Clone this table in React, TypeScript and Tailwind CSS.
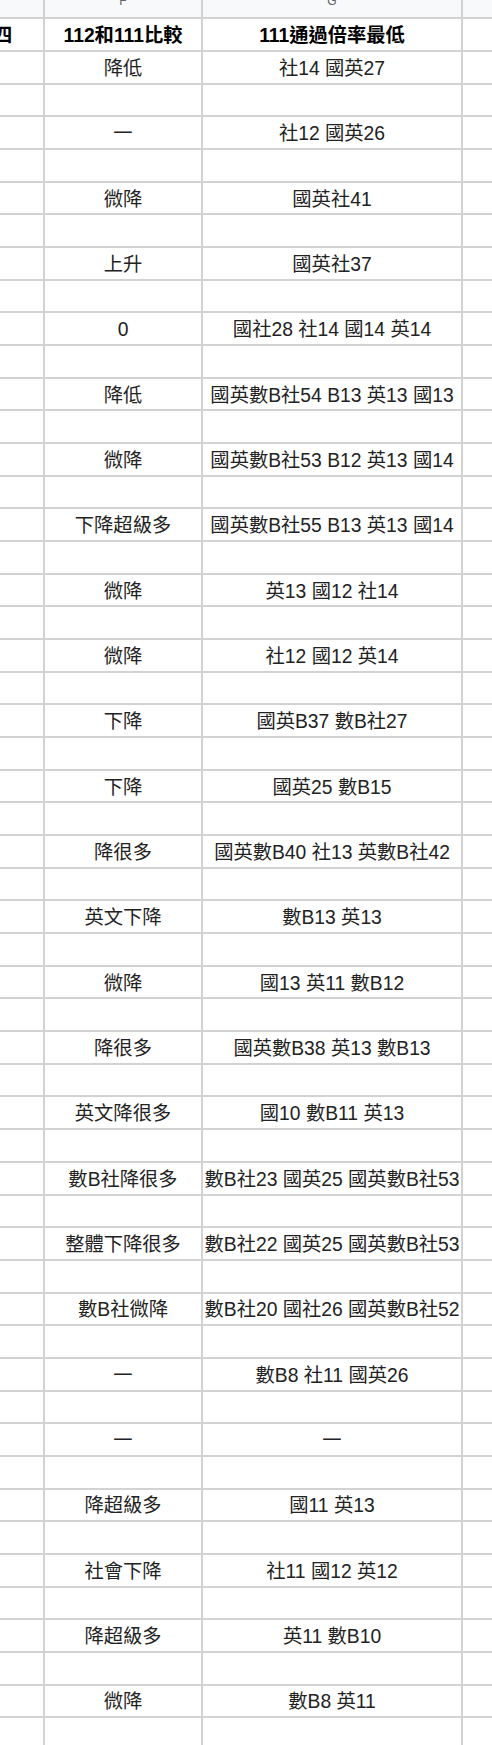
import React from "react";

const rows: [string, string][] = [
  ["降低", "社14 國英27"],
  ["一", "社12 國英26"],
  ["微降", "國英社41"],
  ["上升", "國英社37"],
  ["0", "國社28 社14 國14 英14"],
  ["降低", "國英數B社54 B13 英13 國13"],
  ["微降", "國英數B社53 B12 英13 國14"],
  ["下降超級多", "國英數B社55 B13 英13 國14"],
  ["微降", "英13 國12 社14"],
  ["微降", "社12 國12 英14"],
  ["下降", "國英B37 數B社27"],
  ["下降", "國英25 數B15"],
  ["降很多", "國英數B40 社13 英數B社42"],
  ["英文下降", "數B13 英13"],
  ["微降", "國13 英11 數B12"],
  ["降很多", "國英數B38 英13 數B13"],
  ["英文降很多", "國10 數B11 英13"],
  ["數B社降很多", "數B社23 國英25 國英數B社53"],
  ["整體下降很多", "數B社22 國英25 國英數B社53"],
  ["數B社微降", "數B社20 國社26 國英數B社52"],
  ["一", "數B8 社11 國英26"],
  ["一", "一"],
  ["降超級多", "國11 英13"],
  ["社會下降", "社11 國12 英12"],
  ["降超級多", "英11 數B10"],
  ["微降", "數B8 英11"],
];

const line = "border-[#d2d2d2]";

function Row({ a, b, h, bold }: { a: string; b: string; h: string; bold?: boolean }) {
  const tone = bold ? "font-bold text-black" : "text-[#222222]";
  return (
    <div className={`flex ${h}`}>
      <div className={`w-[45px] shrink-0 border-r-2 border-b-2 ${line}`} />
      <div className={`w-[158px] shrink-0 border-r-2 border-b-2 ${line} flex items-center justify-center whitespace-nowrap pt-[4px] ${tone}`}>
        {a}
      </div>
      <div className={`w-[260px] shrink-0 border-r-2 border-b-2 ${line} flex items-center justify-center whitespace-nowrap pt-[4px] ${tone}`}>
        {b}
      </div>
      <div className={`flex-1 border-b-2 ${line}`} />
    </div>
  );
}

export default function App() {
  const out: React.ReactNode[] = [];
  rows.forEach(([a, b], i) => {
    out.push(<Row key={`d${i}`} a={a} b={b} h="h-[32.68px]" />);
    out.push(<Row key={`e${i}`} a="" b="" h="h-[32.68px]" />);
  });
  return (
    <div
      className="w-[492px] h-[1745px] overflow-hidden bg-white text-[19.3px]"
      style={{ fontFamily: '"Liberation Sans", "Noto Sans CJK TC", sans-serif' }}
    >
      {/* column letter row */}
      <div className="flex h-[19.3px] bg-[#f8f9fa] text-[#5f6368] text-[12px] leading-[12px] overflow-hidden">
        <div className={`w-[45px] shrink-0 border-r-2 border-b-2 ${line}`} />
        <div className={`w-[158px] shrink-0 border-r-2 border-b-2 ${line} flex justify-center overflow-hidden`}>
          <span className="-mt-[5px]">F</span>
        </div>
        <div className={`w-[260px] shrink-0 border-r-2 border-b-2 ${line} flex justify-center overflow-hidden`}>
          <span className="-mt-[5px]">G</span>
        </div>
        <div className={`flex-1 border-b-2 ${line}`} />
      </div>
      {/* header row */}
      <div className="flex h-[32.7px]">
        <div className={`w-[45px] shrink-0 border-r-2 border-b-2 ${line} flex items-center overflow-hidden pt-[4px] font-bold text-black`}>
          <span className="-ml-[7px]">四</span>
        </div>
        <div className={`w-[158px] shrink-0 border-r-2 border-b-2 ${line} flex items-center justify-center whitespace-nowrap pt-[4px] font-bold text-black`}>
          112和111比較
        </div>
        <div className={`w-[260px] shrink-0 border-r-2 border-b-2 ${line} flex items-center justify-center whitespace-nowrap pt-[4px] font-bold text-black`}>
          111通過倍率最低
        </div>
        <div className={`flex-1 border-b-2 ${line}`} />
      </div>
      {out}
    </div>
  );
}
